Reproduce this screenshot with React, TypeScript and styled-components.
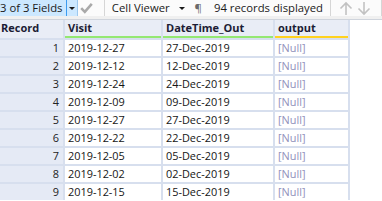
import styled, { createGlobalStyle } from 'styled-components';

interface IRow {
  id: number;
  visit: string;
  dateOut: string;
}

const rows: IRow[] = [
  { id: 1, visit: '2019-12-27', dateOut: '27-Dec-2019' },
  { id: 2, visit: '2019-12-12', dateOut: '12-Dec-2019' },
  { id: 3, visit: '2019-12-24', dateOut: '24-Dec-2019' },
  { id: 4, visit: '2019-12-09', dateOut: '09-Dec-2019' },
  { id: 5, visit: '2019-12-27', dateOut: '27-Dec-2019' },
  { id: 6, visit: '2019-12-22', dateOut: '22-Dec-2019' },
  { id: 7, visit: '2019-12-05', dateOut: '05-Dec-2019' },
  { id: 8, visit: '2019-12-02', dateOut: '02-Dec-2019' },
  { id: 9, visit: '2019-12-15', dateOut: '15-Dec-2019' },
];

export default function App() {
  return (
    <>
      <GlobalStyle />
      <Page>
        <Toolbar>
          <FieldsBox>3 of 3 Fields</FieldsBox>
          <DropBtn>
            <Caret />
          </DropBtn>
          <IconSlot $ml={2}>
            <svg width="13" height="12" viewBox="0 0 13 12">
              <path d="M1.2 6.2 L4.8 9.8 L11.8 1.8" fill="none" stroke="#a9a9a9" strokeWidth="2.6" />
            </svg>
          </IconSlot>
          <Sep $ml={11} />
          <ToolText $ml={7}>Cell Viewer</ToolText>
          <CaretSlot>
            <Caret />
          </CaretSlot>
          <Pilcrow>¶</Pilcrow>
          <ToolText $ml={12}>94 records displayed</ToolText>
          <Sep $ml={7} />
          <IconSlot $ml={8}>
            <svg width="14" height="15" viewBox="0 0 14 15">
              <path d="M7 14 V2 M1.5 7.5 L7 2 L12.5 7.5" fill="none" stroke="#c2c2c2" strokeWidth="1.6" />
            </svg>
          </IconSlot>
          <IconSlot $ml={4}>
            <svg width="14" height="15" viewBox="0 0 14 15">
              <path d="M7 1 V13 M1.5 7.5 L7 13 L12.5 7.5" fill="none" stroke="#c2c2c2" strokeWidth="1.6" />
            </svg>
          </IconSlot>
          <Sep $ml={10} />
        </Toolbar>
        <Spacer />
        <Grid>
          <HeadCell>Record</HeadCell>
          <HeadCell $accent="#94e872">Visit</HeadCell>
          <HeadCell $accent="#94e872">DateTime_Out</HeadCell>
          <HeadCell $accent="#ffd21e">output</HeadCell>
          {rows.map((row) => (
            <Row key={row.id}>
              <RecordCell>{row.id}</RecordCell>
              <Cell>{row.visit}</Cell>
              <Cell>{row.dateOut}</Cell>
              <Cell $null>[Null]</Cell>
            </Row>
          ))}
        </Grid>
      </Page>
    </>
  );
}

const GlobalStyle = createGlobalStyle`
  html, body {
    margin: 0;
    padding: 0;
    background: #ffffff;
    overflow: hidden;
  }
  body {
    font-family: 'Open Sans', 'Noto Sans', sans-serif;
  }
`;

const Page = styled.div`
  width: 382px;
  height: 201px;
  display: flex;
  flex-direction: column;
  overflow: hidden;
  background: #ffffff;
`;

const Toolbar = styled.div`
  display: flex;
  align-items: center;
  height: 16px;
  flex-shrink: 0;
  background: #fbfbfb;
  font-size: 11.3px;
  color: #1a1a1a;
  white-space: nowrap;
`;

const FieldsBox = styled.div`
  box-sizing: border-box;
  width: 68px;
  height: 16px;
  line-height: 16px;
  background: #cce8ff;
  border-right: 1px solid #3d9cf0;
  overflow: hidden;
`;

const DropBtn = styled.div`
  box-sizing: border-box;
  width: 11px;
  height: 16px;
  display: flex;
  align-items: center;
  justify-content: center;
  background: #cce8ff;
  border-right: 1px solid #9cc8ee;
`;

const Caret = styled.span`
  width: 0;
  height: 0;
  border-left: 3px solid transparent;
  border-right: 3px solid transparent;
  border-top: 3px solid #1a1a1a;
`;

const CaretSlot = styled.div`
  display: flex;
  align-items: center;
  margin-left: 9px;
  height: 16px;
`;

const IconSlot = styled.div<{ $ml: number }>`
  display: flex;
  align-items: center;
  margin-left: ${(p) => p.$ml}px;
  height: 16px;
`;

const Sep = styled.div<{ $ml: number }>`
  width: 1px;
  height: 16px;
  margin-left: ${(p) => p.$ml}px;
  background: #d6d6d6;
  flex-shrink: 0;
`;

const ToolText = styled.span<{ $ml: number }>`
  margin-left: ${(p) => p.$ml}px;
  line-height: 16px;
`;

const Pilcrow = styled.span`
  margin-left: 10px;
  line-height: 16px;
  color: #6a6a6a;
`;

const Spacer = styled.div`
  height: 3px;
  flex-shrink: 0;
  background: #f0f0f0;
  border-bottom: 1px solid #cfd4dc;
`;

const Grid = styled.div`
  display: grid;
  grid-template-columns: 63px 96px 110px 73px;
  grid-template-rows: 18px;
  grid-auto-rows: 16px;
  gap: 2px;
  padding-right: 2px;
  width: fit-content;
  background: #d7dfee;
  font-size: 10.9px;
`;

const Row = styled.div`
  display: contents;
`;

const HeadCell = styled.div<{ $accent?: string }>`
  box-sizing: border-box;
  padding-left: ${(p) => (p.$accent ? 3 : 1)}px;
  background: #e9edf6;
  border-bottom: 2px solid ${(p) => p.$accent ?? '#e9edf6'};
  font-weight: 700;
  font-size: 11px;
  line-height: 16px;
  color: #1c1c34;
  white-space: nowrap;
  overflow: hidden;
`;

const RecordCell = styled.div`
  padding-right: 4px;
  background: #e5eaf5;
  text-align: right;
  line-height: 16px;
  color: #222222;
`;

const Cell = styled.div<{ $null?: boolean }>`
  padding-left: 3px;
  background: #ffffff;
  line-height: 16px;
  color: ${(p) => (p.$null ? '#9191bb' : '#151515')};
  white-space: nowrap;
  overflow: hidden;
`;
